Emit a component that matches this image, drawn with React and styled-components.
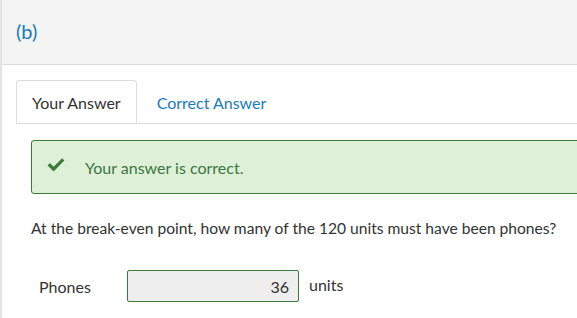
import React from "react";
import styled, { createGlobalStyle } from "styled-components";

const Global = createGlobalStyle`
  html, body { margin: 0; padding: 0; overflow: hidden; background: #fff; }
  body { font-family: Lato, "Open Sans", sans-serif; color: #333; }
`;

const Page = styled.div`
  width: 100%;
  height: 318px;
  overflow: hidden;
  border-left: 2px solid #e4e4e4;
  box-sizing: border-box;
`;

const Header = styled.div`
  height: 65px;
  background: #f4f4f4;
  border-bottom: 1px solid #dcdcdc;
  display: flex;
  align-items: center;
  padding-left: 14px;
  box-sizing: border-box;
`;

const PartLabel = styled.span`
  color: #1a7bb9;
  font-size: 20px;
  margin-top: -2px;
`;

const Body = styled.div`
  padding: 15px 0 0 14px;
`;

const Tabs = styled.div`
  display: flex;
  border-bottom: 1px solid #dcdcdc;
  height: 43px;
`;

const Tab = styled.div`
  height: 43px;
  box-sizing: border-box;
  padding: 1px 15px 0;
  display: flex;
  align-items: center;
  font-size: 16px;
  border: 1px solid ${p => (p.$active ? "#dcdcdc" : "transparent")};
  border-bottom-color: ${p => (p.$active ? "#fff" : "transparent")};
  border-radius: 4px 4px 0 0;
  background: #fff;
  color: ${p => (p.$active ? "#333" : "#1a7bb9")};
  margin-right: 4px;
`;

const Content = styled.div`
  padding-left: 15px;
`;

const Alert = styled.div`
  margin: 16px -20px 0 0;
  height: 54px;
  box-sizing: border-box;
  border: 1px solid #3c7a3c;
  border-radius: 3px;
  background: #dff0d8;
  display: flex;
  align-items: center;
  padding-left: 15px;
  color: #3c763d;
  font-size: 16px;
`;

const CheckIcon = styled.svg`
  width: 18px;
  height: 14px;
  margin-right: 20px;
  margin-top: -4px;
  fill: #3b7a3b;
`;

const Question = styled.p`
  margin: 24px 0 0;
  font-size: 15.6px;
  line-height: 20px;
`;

const Row = styled.div`
  display: flex;
  align-items: center;
  margin-top: 32px;
  font-size: 16px;
`;

const Label = styled.span`
  width: 96px;
  padding-left: 8px;
  box-sizing: border-box;
`;

const Input = styled.div`
  width: 172px;
  height: 32px;
  box-sizing: border-box;
  background: #eeeeee;
  border: 1px solid #3c7a3c;
  border-radius: 2px;
  display: flex;
  align-items: center;
  justify-content: flex-end;
  padding-right: 9px;
`;

const Unit = styled.span`
  margin-left: 10px;
  margin-top: -3px;
`;

export default function App() {
  return (
    <>
      <Global />
      <Page>
        <Header>
          <PartLabel>(b)</PartLabel>
        </Header>
        <Body>
          <Tabs>
            <Tab $active>Your Answer</Tab>
            <Tab>Correct Answer</Tab>
          </Tabs>
          <Content>
            <Alert>
              <CheckIcon viewBox="0 0 18 14">
                <path d="M0.6 7.4 L2.9 5.1 L6.6 8.8 L15.1 0.3 L17.4 2.6 L6.6 13.4 Z" />
              </CheckIcon>
              Your answer is correct.
            </Alert>
            <Question>
              At the break-even point, how many of the 120 units must have been phones?
            </Question>
            <Row>
              <Label>Phones</Label>
              <Input>36</Input>
              <Unit>units</Unit>
            </Row>
          </Content>
        </Body>
      </Page>
    </>
  );
}
